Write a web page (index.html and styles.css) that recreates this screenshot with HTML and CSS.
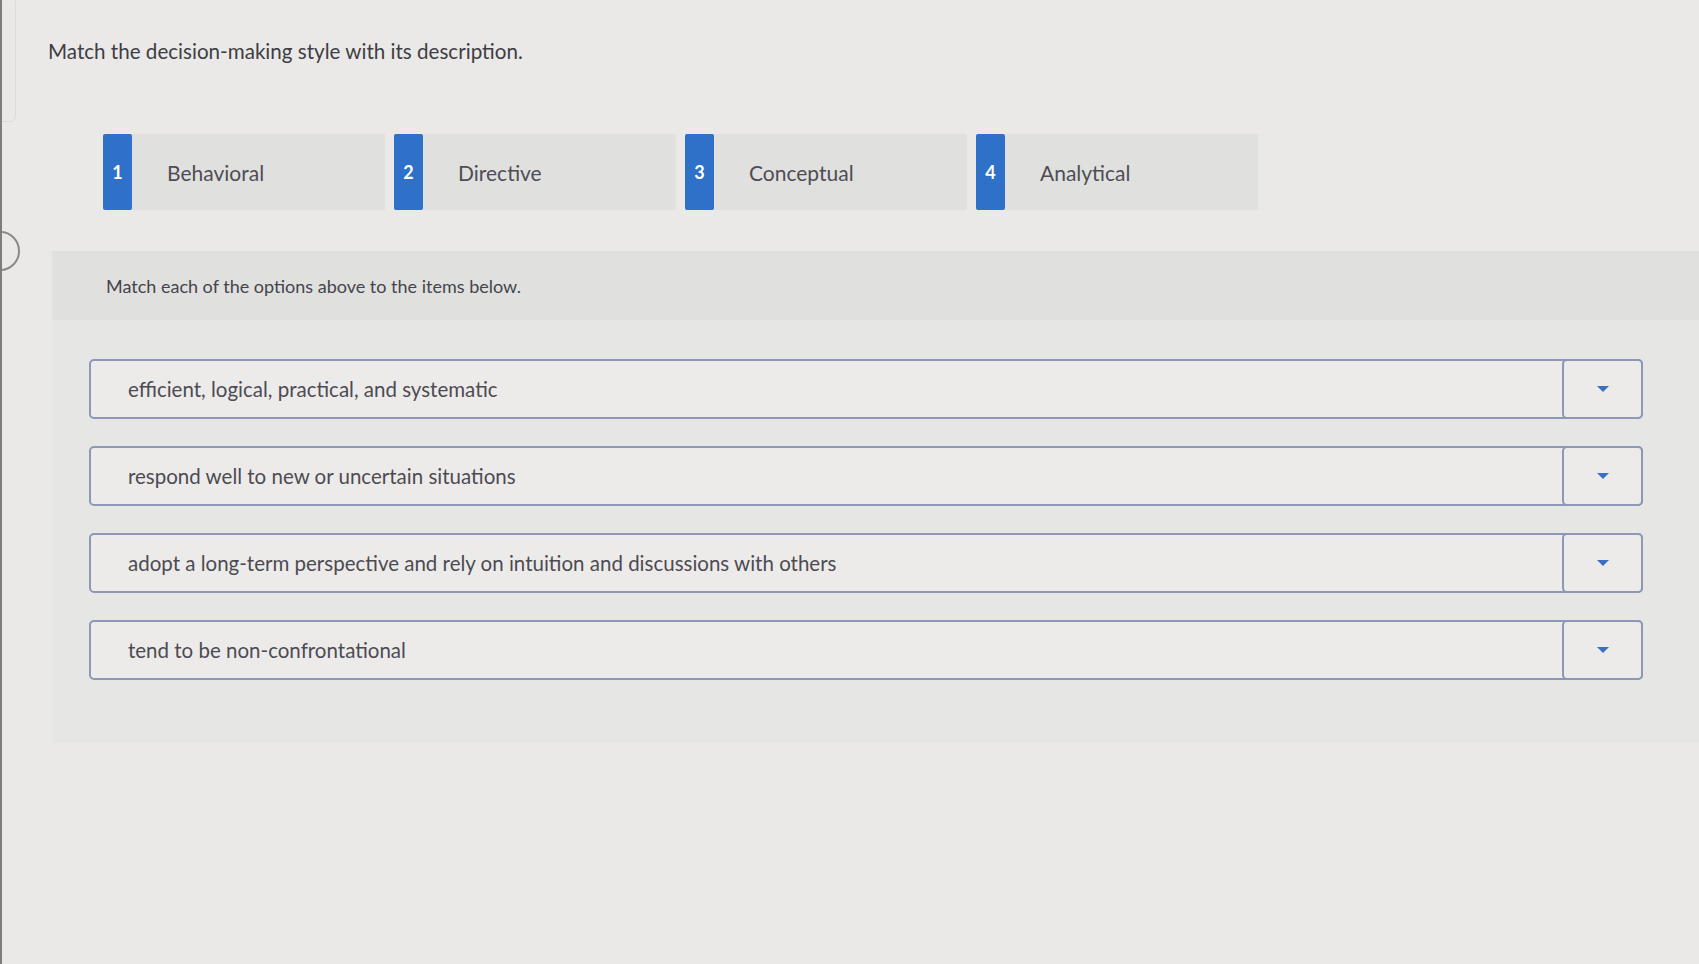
FILE: index.html
```html
<!DOCTYPE html>
<html lang="en">
<head>
<meta charset="utf-8">
<title>Matching</title>
<link rel="stylesheet" href="styles.css">
</head>
<body>
<div class="app">
  <div class="side-frame"></div>
  <div class="side-circle"></div>
  <h1 class="title">Match the decision-making style with its description.</h1>

  <div class="options">
    <div class="tile"><span class="badge">1</span><span class="label">Behavioral</span></div>
    <div class="tile"><span class="badge">2</span><span class="label">Directive</span></div>
    <div class="tile"><span class="badge">3</span><span class="label">Conceptual</span></div>
    <div class="tile"><span class="badge">4</span><span class="label">Analytical</span></div>
  </div>

  <section class="panel">
    <div class="panel-head">Match each of the options above to the items below.</div>
    <div class="rows">
      <div class="row">
        <div class="row-text">efficient, logical, practical, and systematic</div>
        <div class="row-btn"><svg width="14" height="8" viewBox="0 0 14 8"><path d="M1 1h12L7 7z" fill="#3a6fc2"/></svg></div>
      </div>
      <div class="row">
        <div class="row-text">respond well to new or uncertain situations</div>
        <div class="row-btn"><svg width="14" height="8" viewBox="0 0 14 8"><path d="M1 1h12L7 7z" fill="#3a6fc2"/></svg></div>
      </div>
      <div class="row">
        <div class="row-text">adopt a long-term perspective and rely on intuition and discussions with others</div>
        <div class="row-btn"><svg width="14" height="8" viewBox="0 0 14 8"><path d="M1 1h12L7 7z" fill="#3a6fc2"/></svg></div>
      </div>
      <div class="row">
        <div class="row-text">tend to be non-confrontational</div>
        <div class="row-btn"><svg width="14" height="8" viewBox="0 0 14 8"><path d="M1 1h12L7 7z" fill="#3a6fc2"/></svg></div>
      </div>
    </div>
  </section>
</div>
</body>
</html>
```
FILE: styles.css
```css
html, body {
  margin: 0;
  padding: 0;
}
body {
  background: #eae9e7;
  font-family: Lato, "Open Sans", "Liberation Sans", sans-serif;
  color: #4c4b53;
}
.app {
  position: relative;
  min-height: 964px;
  border-left: 2px solid #7d7d7d;
  box-sizing: border-box;
  overflow: hidden;
}
.side-frame {
  position: absolute;
  left: -8px;
  top: -4px;
  width: 20px;
  height: 124px;
  border: 1px solid #dcdcdb;
  border-radius: 6px;
}
.side-circle {
  position: absolute;
  left: -22px;
  top: 231px;
  width: 36px;
  height: 36px;
  border: 2px solid #8a8a8a;
  border-radius: 50%;
}
.title {
  margin: 0;
  padding: 38px 0 0 46px;
  font-size: 20.6px;
  font-weight: 400;
  line-height: 26px;
  color: #3e3d45;
}
.options {
  display: flex;
  gap: 9px;
  margin: 70px 0 0 101px;
}
.tile {
  display: flex;
  align-items: center;
  width: 282px;
  height: 76px;
  background: #e0e0df;
}
.badge {
  display: flex;
  align-items: center;
  justify-content: center;
  width: 29px;
  height: 100%;
  background: #2f70c8;
  color: #fff;
  font-weight: 700;
  font-size: 18px;
  border-radius: 2px;
}
.label {
  padding-left: 35px;
  font-size: 21px;
  color: #4e4d55;
}
.panel {
  margin: 41px 0 0 50px;
  background: #e6e6e4;
  padding-bottom: 63px;
}
.panel-head {
  height: 69px;
  display: flex;
  align-items: center;
  padding-left: 54px;
  background: #e0e0df;
  font-size: 18px;
  color: #45444c;
}
.rows {
  display: flex;
  flex-direction: column;
  gap: 27px;
  padding: 39px 56px 0 37px;
}
.row {
  display: flex;
  height: 60px;
  box-sizing: border-box;
  border: 2px solid #8e97b7;
  border-radius: 5px;
  background: #ecebe9;
}
.row-text {
  flex: 1;
  display: flex;
  align-items: center;
  padding-left: 37px;
  font-size: 20.5px;
  color: #4c4b53;
}
.row-btn {
  width: 77px;
  margin: -2px -2px -2px 0;
  border: 2px solid #8e97b7;
  border-radius: 5px;
  display: flex;
  align-items: center;
  justify-content: center;
  background: #ecebe9;
}
```
